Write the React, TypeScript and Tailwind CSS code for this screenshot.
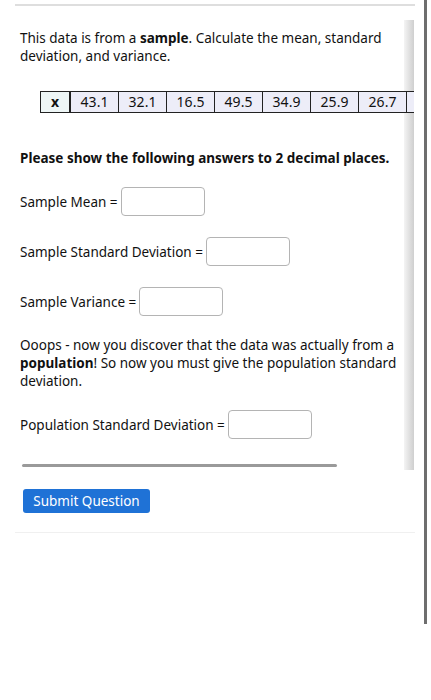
import React from 'react';

const values = ['43.1', '32.1', '16.5', '49.5', '34.9', '25.9', '26.7', '18.2'];

const AnswerRow: React.FC<{ label: string; className?: string }> = ({ label, className }) => (
  <div className={`flex items-center ${className ?? ''}`}>
    <span>{label} =</span>
    <input
      type="text"
      className="ml-[3px] h-[29px] w-[84px] rounded-[4px] border border-[#b4b4b4] bg-white outline-none"
    />
  </div>
);

const App: React.FC = () => {
  return (
    <div className="relative flex h-[700px] w-[431px] bg-white font-['Noto_Sans',sans-serif] text-[13.5px] leading-[18px] text-[#111]">
      {/* scroll shadow on the right of the question frame */}
      <div className="pointer-events-none absolute left-[404px] top-[20px] h-[450px] w-[10px] bg-gradient-to-r from-[#f4f4f4] to-[#cfcfcf]" />

      <div className="relative flex min-w-0 flex-1 flex-col">
        <div className="ml-[15px] mt-[4px] h-[2px] w-[400px] bg-[#dedede]" />

        <div className="w-[414px] overflow-hidden pl-[20px]">
          <p className="mt-[23px] w-[376px]">
            This data is from a <b>sample</b>. Calculate the mean, standard deviation, and variance.
          </p>

          <div className="ml-[20px] mt-[26px] flex w-max text-[14px]">
            <div className="flex h-[22px] w-[31px] items-center justify-center border border-r-2 border-[#222] bg-[#eef6f6] font-bold">
              x
            </div>
            {values.map((v) => (
              <div
                key={v}
                className="flex h-[22px] w-[48px] items-center justify-center border border-l-0 border-[#222] bg-[#ededf8]"
              >
                {v}
              </div>
            ))}
          </div>

          <p className="mt-[36px] whitespace-nowrap font-bold">Please show the following answers to 2 decimal places.</p>

          <AnswerRow label="Sample Mean" className="mt-[20px]" />
          <AnswerRow label="Sample Standard Deviation" className="mt-[21px]" />
          <AnswerRow label="Sample Variance" className="mt-[21px]" />

          <p className="mt-[20px] w-[386px]">
            Ooops - now you discover that the data was actually from a <b>population</b>! So now you must give the
            population standard deviation.
          </p>

          <AnswerRow label="Population Standard Deviation" className="mt-[20px]" />

          <div className="ml-[2px] mt-[25px] h-[3px] w-[315px] rounded-full bg-[#9a9a9a]" />

          <button
            type="button"
            className="ml-[3px] mt-[22px] h-[24px] w-[127px] rounded-[3px] bg-[#1f72d6] text-[13.5px] text-white"
          >
            Submit Question
          </button>
        </div>

        <div className="ml-[15px] mt-[19px] h-px w-[400px] bg-[#f0f0f0]" />
      </div>

      <div className="h-[624px] w-[3px] shrink-0 bg-[#6e6e6e]" />
      <div className="w-[4px] shrink-0" />
    </div>
  );
};

export default App;
